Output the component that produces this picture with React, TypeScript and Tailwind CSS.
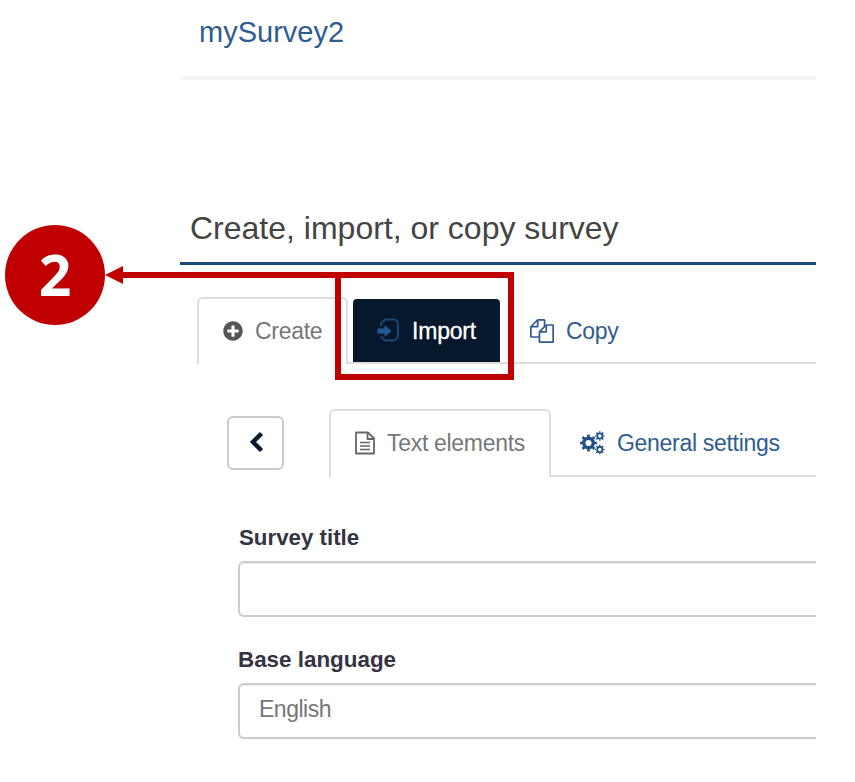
import React from "react";
import { FaPlusCircle } from "react-icons/fa";

function ImportIcon() {
  return (
    <svg className="relative -top-px h-[24px] w-[24px] shrink-0" viewBox="0 0 24 24" fill="none" stroke="#1d4a7d" strokeWidth="1.9">
      <path d="M4 8V6.500Q4 5 6 3.500Q7.500 1.500 9 1.500H17Q19 1.500 20 3.500Q21 4.500 21 7V17Q21 19 20 20.500Q18.500 22.500 16 22.500H9Q7 22.500 5.500 20.500L4 18.500" />
      <path d="M0.500 10.500H7.500V7L14.500 13L7.500 19V15.500H0.500Z" fill="#225a97" stroke="none" />
    </svg>
  );
}

function CopyIcon() {
  return (
    <svg className="h-[24px] w-[24px] shrink-0" viewBox="0 0 1792 1792" fill="#2f5c8f">
      <path d="M1696 384q40 0 68 28t28 68v1216q0 40-28 68t-68 28h-960q-40 0-68-28t-28-68v-288h-544q-40 0-68-28t-28-68v-672q0-40 20-88t48-76l408-408q28-28 76-48t88-20h416q40 0 68 28t28 68v328q68-40 128-40h416zm-544 213l-299 299h299v-299zm-640-384l-299 299h299v-299zm196 647l316-316v-416h-384v416q0 40-28 68t-68 28h-416v640h512v-256q0-40 20-88t48-76zm956 804v-1152h-384v416q0 40-28 68t-68 28h-416v640h896z" />
    </svg>
  );
}

function TextFileIcon() {
  return (
    <svg className="h-[24px] w-[20px] shrink-0" viewBox="0 0 20 24" fill="none" stroke="#666" strokeWidth="1.8" strokeLinejoin="round">
      <path d="M1 1.500H13L19 7.500V22.500H1Z" />
      <path d="M12.500 1.500V8H19" />
      <path d="M5 11.500H15M5 15H15M5 18.500H15" strokeWidth="1.700" />
    </svg>
  );
}

function GearsIcon() {
  return (
    <svg className="h-[24px] w-[26px] shrink-0" viewBox="0 0 26 24" fill="none" stroke="#1f4f86">
      <circle cx="9.500" cy="12" r="4.800" strokeWidth="3.400" />
      <circle cx="9.500" cy="12" r="7.200" strokeWidth="2.400" pathLength="80" strokeDasharray="4.800 5.200" strokeDashoffset="2.400" />
      <circle cx="20.800" cy="5" r="2.600" strokeWidth="1.700" />
      <circle cx="20.800" cy="5" r="4" strokeWidth="1.500" pathLength="80" strokeDasharray="4.800 5.200" strokeDashoffset="2.400" />
      <circle cx="20.800" cy="18.500" r="2.600" strokeWidth="1.700" />
      <circle cx="20.800" cy="18.500" r="4" strokeWidth="1.500" pathLength="80" strokeDasharray="4.800 5.200" strokeDashoffset="2.400" />
    </svg>
  );
}

function Callout() {
  return (
    <>
      <div className="absolute left-[5px] top-[225px] flex h-[100px] w-[100px] items-center justify-center rounded-full bg-[#c00000] pb-[1px] font-['Open_Sans',sans-serif] text-[57px] font-bold leading-none text-white">
        2
      </div>
      <svg className="absolute left-[105px] top-[265px] h-[20px] w-[236px]" viewBox="0 0 236 20" fill="#c00000">
        <path d="M0 10L18 1V7H236V13H18V19Z" />
      </svg>
      <div className="absolute left-[335px] top-[272px] h-[108px] w-[179px] border-[6px] border-[#c00000]" />
    </>
  );
}

export default function App() {
  return (
    <div className="relative h-[782px] w-[855px] overflow-hidden bg-white font-['Liberation_Sans',Arial,sans-serif] text-[#666]">
      <main className="ml-[180px] w-[636px]">
        <header className="h-[80px] border-b-[4px] border-[#f4f6f6] pl-[19px] pt-[14px] text-[29px] leading-[36px] text-[#2f5c8f]">
          mySurvey2
        </header>
        <h1 className="mt-[126px] h-[59px] border-b-[3px] border-[#164b7d] pl-[10px] pt-[4px] text-[32px] leading-[36px] text-[#444]">
          Create, import, or copy survey
        </h1>
        <nav className="mt-[32px] flex h-[67px] pl-[17px] text-[23px] tracking-[-0.300px]">
          <div className="flex w-[151px] shrink-0 items-center gap-[12px] rounded-t-[6px] border-2 border-b-0 border-[#ddd] pb-[1px] pl-[24px] text-[#777]">
            <FaPlusCircle className="h-[20px] w-[20px] text-[#555]" />
            <span>Create</span>
          </div>
          <div className="flex flex-1 border-b-2 border-[#ddd] pl-[5px]">
            <div className="mt-[2px] flex h-[63px] w-[147px] items-center gap-[11px] rounded-t-[4px] bg-[#06182b] pl-[24px] pt-px text-white">
              <ImportIcon />
              <span className="tracking-[-0.200px] [-webkit-text-stroke:0.300px_white]">Import</span>
            </div>
            <div className="flex items-center gap-[12px] pl-[30px] pt-[3px] text-[#2f5c8f]">
              <CopyIcon />
              <span>Copy</span>
            </div>
          </div>
        </nav>
        <nav className="mt-[45px] flex h-[68px] text-[23px] tracking-[-0.300px]">
          <button className="ml-[47px] mt-[7px] flex h-[54px] w-[57px] shrink-0 items-center justify-center rounded-[6px] border-2 border-[#ccc]">
            <svg className="relative -top-px h-[22px] w-[16px]" viewBox="0 0 16 22" fill="none" stroke="#081a2e" strokeWidth="4.500">
              <path d="M13.500 2.500L5 11L13.500 19.500" />
            </svg>
          </button>
          <div className="ml-[45px] flex w-[222px] shrink-0 items-center gap-[12px] rounded-t-[6px] border-2 border-b-0 border-[#ddd] pb-[2px] pl-[24px] text-[#777]">
            <TextFileIcon />
            <span>Text elements</span>
          </div>
          <div className="flex flex-1 items-center gap-[12px] border-b-2 border-[#ddd] pl-[28px] pt-[2px] text-[#2f5c8f]">
            <GearsIcon />
            <span>General settings</span>
          </div>
        </nav>
        <section className="pl-[58px] pt-[46px]">
          <label className="block h-[38px] pl-[1px] text-[22.300px] font-bold leading-[30px] text-[#343442]">Survey title</label>
          <div className="h-[56px] rounded-l-[6px] border-2 border-r-0 border-[#ccc] shadow-[inset_0_1px_1px_#eee]" />
          <label className="mt-[28px] block h-[38px] text-[22.400px] font-bold leading-[30px] text-[#343442]">Base language</label>
          <div className="h-[56px] rounded-l-[6px] border-2 border-r-0 border-[#ccc] pl-[19px] pt-[9px] text-[23px] leading-[30px] tracking-[-0.500px] text-[#777] shadow-[inset_0_1px_1px_#eee]">
            English
          </div>
        </section>
      </main>
      <Callout />
    </div>
  );
}
